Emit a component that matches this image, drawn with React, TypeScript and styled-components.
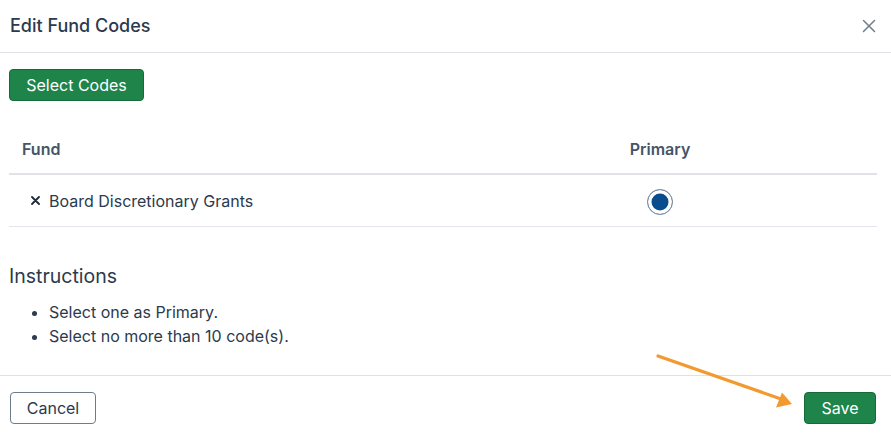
import React from "react";
import styled, { createGlobalStyle } from "styled-components";

const Global = createGlobalStyle`
  html, body { margin: 0; padding: 0; background: #ffffff; }
  body { font-family: "Inter", "Noto Sans", sans-serif; color: #2b3a4d; }
  * { box-sizing: border-box; }
`;

const Modal = styled.div`
  position: relative;
  width: 891px;
  height: 436px;
  overflow: hidden;
  background: #fff;
`;

const Header = styled.header`
  height: 53px;
  display: flex;
  align-items: center;
  justify-content: space-between;
  padding: 0 14px 1px 10px;
  border-bottom: 1px solid #dee2e6;
`;

const Title = styled.h1`
  margin: 0;
  font-size: 18px;
  font-weight: 500;
  color: #2b3a4d;
`;

const CloseButton = styled.button`
  width: 16px;
  height: 16px;
  padding: 0;
  border: 0;
  background: none;
  display: flex;
  align-items: center;
  justify-content: center;
`;

const Body = styled.main`
  padding: 16px 14px 0 9px;
  height: 322px;
`;

const PrimaryButton = styled.button<{ $w?: number }>`
  height: 32px;
  width: ${(p) => (p.$w ? `${p.$w}px` : "auto")};
  padding: 0;
  border-radius: 4px;
  border: 1px solid #176b3b;
  background: #1e844a;
  color: #fff;
  font-family: inherit;
  font-size: 16px;
  font-weight: 400;
`;

const Table = styled.div`
  margin-top: 24px;
`;

const Row = styled.div<{ $head?: boolean }>`
  display: grid;
  grid-template-columns: 608px 86px 1fr;
  align-items: center;
  height: ${(p) => (p.$head ? "50px" : "52px")};
  border-bottom: ${(p) => (p.$head ? "2px solid #dfe3e8" : "1px solid #e2e5e9")};
`;

const HeadCell = styled.div<{ $center?: boolean }>`
  padding: ${(p) => (p.$center ? "0" : "0 0 0 13px")};
  font-size: 16px;
  font-weight: 600;
  color: #465467;
  text-align: ${(p) => (p.$center ? "center" : "left")};
`;

const Cell = styled.div<{ $center?: boolean }>`
  display: flex;
  align-items: center;
  justify-content: ${(p) => (p.$center ? "center" : "flex-start")};
  padding: ${(p) => (p.$center ? "0" : "0 0 0 21px")};
  font-size: 16px;
  color: #2b3a4d;
`;

const RemoveButton = styled.button`
  width: 10px;
  height: 10px;
  padding: 0;
  border: 0;
  background: none;
  margin-right: 9px;
  display: flex;
  align-items: center;
  justify-content: center;
`;

const Radio = styled.span`
  display: block;
  width: 26px;
  height: 26px;
  border-radius: 50%;
  border: 1px solid #8593a3;
  background: #0b4d8c;
  box-shadow: inset 0 0 0 3.5px #fff;
  margin-top: 2px;
`;

const SectionTitle = styled.h2`
  margin: 37px 0 0 0;
  font-size: 19.5px;
  font-weight: 400;
  line-height: 24px;
  color: #2b3a4d;
`;

const List = styled.ul`
  margin: 12px 0 0 0;
  padding-left: 40px;
  font-size: 16px;
  line-height: 24px;
  color: #2b3a4d;
`;

const Footer = styled.footer`
  border-top: 1px solid #dee2e6;
  display: flex;
  justify-content: space-between;
  align-items: center;
  padding: 16px 15px 0 10px;
`;

const OutlineButton = styled.button`
  height: 32px;
  width: 86px;
  padding: 0;
  border-radius: 4px;
  border: 1px solid #6d7b8b;
  background: #fff;
  color: #2b3a4d;
  font-family: inherit;
  font-size: 16px;
`;

const Annotation = styled.svg`
  position: absolute;
  left: 0;
  top: 0;
  pointer-events: none;
`;

export default function App() {
  return (
    <>
      <Global />
      <Modal>
        <Header>
          <Title>Edit Fund Codes</Title>
          <CloseButton aria-label="Close">
            <svg width="14" height="14" viewBox="0 0 14 14">
              <path d="M1.5 1.5L12.5 12.5M12.5 1.5L1.5 12.5" stroke="#6f7c8a" strokeWidth="1.5" strokeLinecap="round" />
            </svg>
          </CloseButton>
        </Header>
        <Body>
          <PrimaryButton $w={135}>Select Codes</PrimaryButton>
          <Table>
            <Row $head>
              <HeadCell>Fund</HeadCell>
              <HeadCell $center>Primary</HeadCell>
              <div />
            </Row>
            <Row>
              <Cell>
                <RemoveButton aria-label="Remove">
                  <svg width="9" height="9" viewBox="0 0 9 9">
                    <path d="M1 1L8 8M8 1L1 8" stroke="#1f2a37" strokeWidth="1.8" strokeLinecap="round" />
                  </svg>
                </RemoveButton>
                Board Discretionary Grants
              </Cell>
              <Cell $center>
                <Radio />
              </Cell>
              <div />
            </Row>
          </Table>
          <SectionTitle>Instructions</SectionTitle>
          <List>
            <li>Select one as Primary.</li>
            <li>Select no more than 10 code(s).</li>
          </List>
        </Body>
        <Footer>
          <OutlineButton>Cancel</OutlineButton>
          <PrimaryButton $w={72}>Save</PrimaryButton>
        </Footer>
        <Annotation width="891" height="436" viewBox="0 0 891 436">
          <line x1="658" y1="356" x2="781" y2="399" stroke="#f29a30" strokeWidth="3.2" strokeLinecap="round" />
          <polygon points="792,404 782,392.5 776,407.5" fill="#f29a30" />
        </Annotation>
      </Modal>
    </>
  );
}
